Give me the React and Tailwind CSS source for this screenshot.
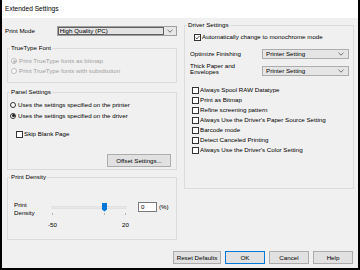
import React from 'react';

const Chevron = () => (
  <svg width="6" height="4" viewBox="0 0 6 4" className="shrink-0">
    <polyline points="0.5,0.8 3,3.2 5.5,0.8" fill="none" stroke="#555" strokeWidth="0.8" />
  </svg>
);

function Radio({ checked, disabled, label }) {
  return (
    <div className="flex items-center h-full gap-[2px]">
      <span
        className={`w-[6px] h-[6px] rounded-full border bg-white flex items-center justify-center shrink-0 ${
          disabled ? 'border-[#bcbcbc]' : 'border-[#333]'
        }`}
      >
        {checked && (
          <span className={`w-[3px] h-[3px] rounded-full ${disabled ? 'bg-[#bcbcbc]' : 'bg-[#1a1a1a]'}`} />
        )}
      </span>
      <span className={disabled ? 'text-[#a0a0a0]' : ''}>{label}</span>
    </div>
  );
}

function Checkbox({ checked, label }) {
  return (
    <div className="flex items-center h-[10px] gap-[1px]">
      <span className="w-[7px] h-[7px] border border-[#333] bg-white flex items-center justify-center shrink-0">
        {checked && (
          <svg width="5" height="5" viewBox="0 0 5 5">
            <polyline points="0.6,2.6 1.9,3.9 4.4,1" fill="none" stroke="#222" strokeWidth="0.8" />
          </svg>
        )}
      </span>
      <span>{label}</span>
    </div>
  );
}

function Select({ value, className }) {
  return (
    <div className={`h-[10px] border border-[#adadad] bg-[#e5e5e5] flex items-center pl-[3px] pr-[4px] ${className}`}>
      <span className="flex-1">{value}</span>
      <Chevron />
    </div>
  );
}

function Button({ children, focus, className }) {
  return (
    <div
      className={`h-[13px] flex items-center justify-center bg-[#e1e1e1] border ${
        focus ? 'border-[#0078d7]' : 'border-[#adadad]'
      } ${className}`}
    >
      {children}
    </div>
  );
}

function Group({ title, className, children }) {
  return (
    <fieldset className={`border border-[#dcdcdc] ${className}`}>
      <legend className="ml-[2px] px-[1px] leading-[8px]">{title}</legend>
      {children}
    </fieldset>
  );
}

export default function App() {
  const options = [
    'Always Spool RAW Datatype',
    'Print as Bitmap',
    'Refine screening pattern',
    "Always Use the Driver's Paper Source Setting",
    'Barcode mode',
    'Detect Canceled Printing',
    "Always Use the Driver's Color Setting",
  ];

  return (
    <div className="w-[360px] h-[270px] bg-[#f0f0f0] border-l-2 border-r-2 border-b-2 border-black flex flex-col font-['Liberation_Sans',Arial,sans-serif] text-[6.2px] leading-[8px] text-black">
      {/* Title bar */}
      <div className="h-[18px] bg-white flex items-center pl-[3px] text-[6.6px]">Extended Settings</div>

      <div className="flex pl-[3px]">
        {/* Left column */}
        <div className="w-[172px] flex flex-col">
          <div className="mt-[8px] h-[10px] flex items-center">
            <span className="w-[52px]">Print Mode</span>
            <div className="w-[121px] h-[10px] border border-[#a0a0a0] bg-[#e8e8e8] flex items-center">
              <div className="flex-1 h-full border border-[#5f5f5f] bg-[#e3e3e3] flex items-center pl-[1px]">
                High Quality (PC)
              </div>
              <div className="w-[12px] flex justify-center">
                <Chevron />
              </div>
            </div>
          </div>

          <Group title="TrueType Font" className="mt-[8px] ml-[2px] w-[170px] h-[39px]">
            <div className="pl-[3px] pt-[4px]">
              <div className="h-[10px]">
                <Radio disabled checked label="Print TrueType fonts as bitmap" />
              </div>
              <div className="h-[10px]">
                <Radio disabled label="Print TrueType fonts with substitution" />
              </div>
            </div>
          </Group>

          <Group title="Panel Settings" className="mt-[5px] ml-[2px] w-[170px] h-[82px]">
            <div className="pl-[2px] pt-[3px] flex flex-col">
              <div className="h-[11px]">
                <Radio label="Uses the settings specified on the printer" />
              </div>
              <div className="h-[11px]">
                <Radio checked label="Uses the settings specified on the driver" />
              </div>
              <div className="mt-[8px] ml-[6px]">
                <Checkbox label="Skip Blank Page" />
              </div>
              <div className="mt-[15px] flex justify-end pr-[5px]">
                <Button className="w-[64px]">Offset Settings...</Button>
              </div>
            </div>
          </Group>

          <Group title="Print Density" className="mt-[3px] ml-[2px] w-[170px] h-[67px]">
            <div className="pl-[6px] pt-[20px] flex items-start">
              <div className="w-[35px] leading-[8px]">
                <div>Print</div>
                <div>Density</div>
              </div>
              <div className="w-[80px] flex flex-col">
                <svg width="80" height="16" viewBox="0 0 80 16">
                  <rect x="3" y="5.5" width="74" height="2" fill="#e7e7e7" stroke="#d6d6d6" strokeWidth="0.5" />
                  <line x1="3.5" y1="12" x2="3.5" y2="14" stroke="#b5b5b5" strokeWidth="1" />
                  <line x1="55.5" y1="12" x2="55.5" y2="14" stroke="#b5b5b5" strokeWidth="1" />
                  <line x1="76.5" y1="12" x2="76.5" y2="14" stroke="#b5b5b5" strokeWidth="1" />
                  <path d="M53 2 H58 V8.5 L55.5 10.5 L53 8.5 Z" fill="#0078d7" />
                </svg>
                <div className="mt-[4px] flex">
                  <span className="-ml-[1px]">-50</span>
                  <span className="ml-[65px]">20</span>
                </div>
              </div>
              <div className="ml-[9px] mt-[1px] w-[19px] h-[10px] bg-white border border-[#7a7a7a] flex items-center pl-[2px]">
                0
              </div>
              <span className="ml-[2px] mt-[2px]">(%)</span>
            </div>
          </Group>
        </div>

        {/* Right column */}
        <div className="ml-[7px] w-[170px]">
          <Group title="Driver Settings" className="mt-[3px] w-[170px] h-[168px]">
            <div className="flex flex-col">
              <div className="mt-[3px] pl-[9px]">
                <Checkbox checked label="Automatically change to monochrome mode" />
              </div>
              <div className="mt-[7px] flex items-center pl-[5px]">
                <span className="w-[72px]">Optimize Finishing</span>
                <Select value="Printer Setting" className="w-[87px]" />
              </div>
              <div className="mt-[4px] flex items-start pl-[5px]">
                <div className="w-[72px] leading-[6px]">
                  <div>Thick Paper and</div>
                  <div>Envelopes</div>
                </div>
                <Select value="Printer Setting" className="w-[87px] mt-[3px]" />
              </div>
              <div className="mt-[9px] pl-[7px] flex flex-col">
                {options.map((o) => (
                  <Checkbox key={o} label={o} />
                ))}
              </div>
            </div>
          </Group>
        </div>
      </div>

      {/* Footer buttons */}
      <div className="mt-auto flex justify-end gap-[4px] pr-[5px] pb-[4px]">
        <Button className="w-[48px]">Reset Defaults</Button>
        <Button focus className="w-[40px]">OK</Button>
        <Button className="w-[40px]">Cancel</Button>
        <Button className="w-[40px]">Help</Button>
      </div>
    </div>
  );
}
